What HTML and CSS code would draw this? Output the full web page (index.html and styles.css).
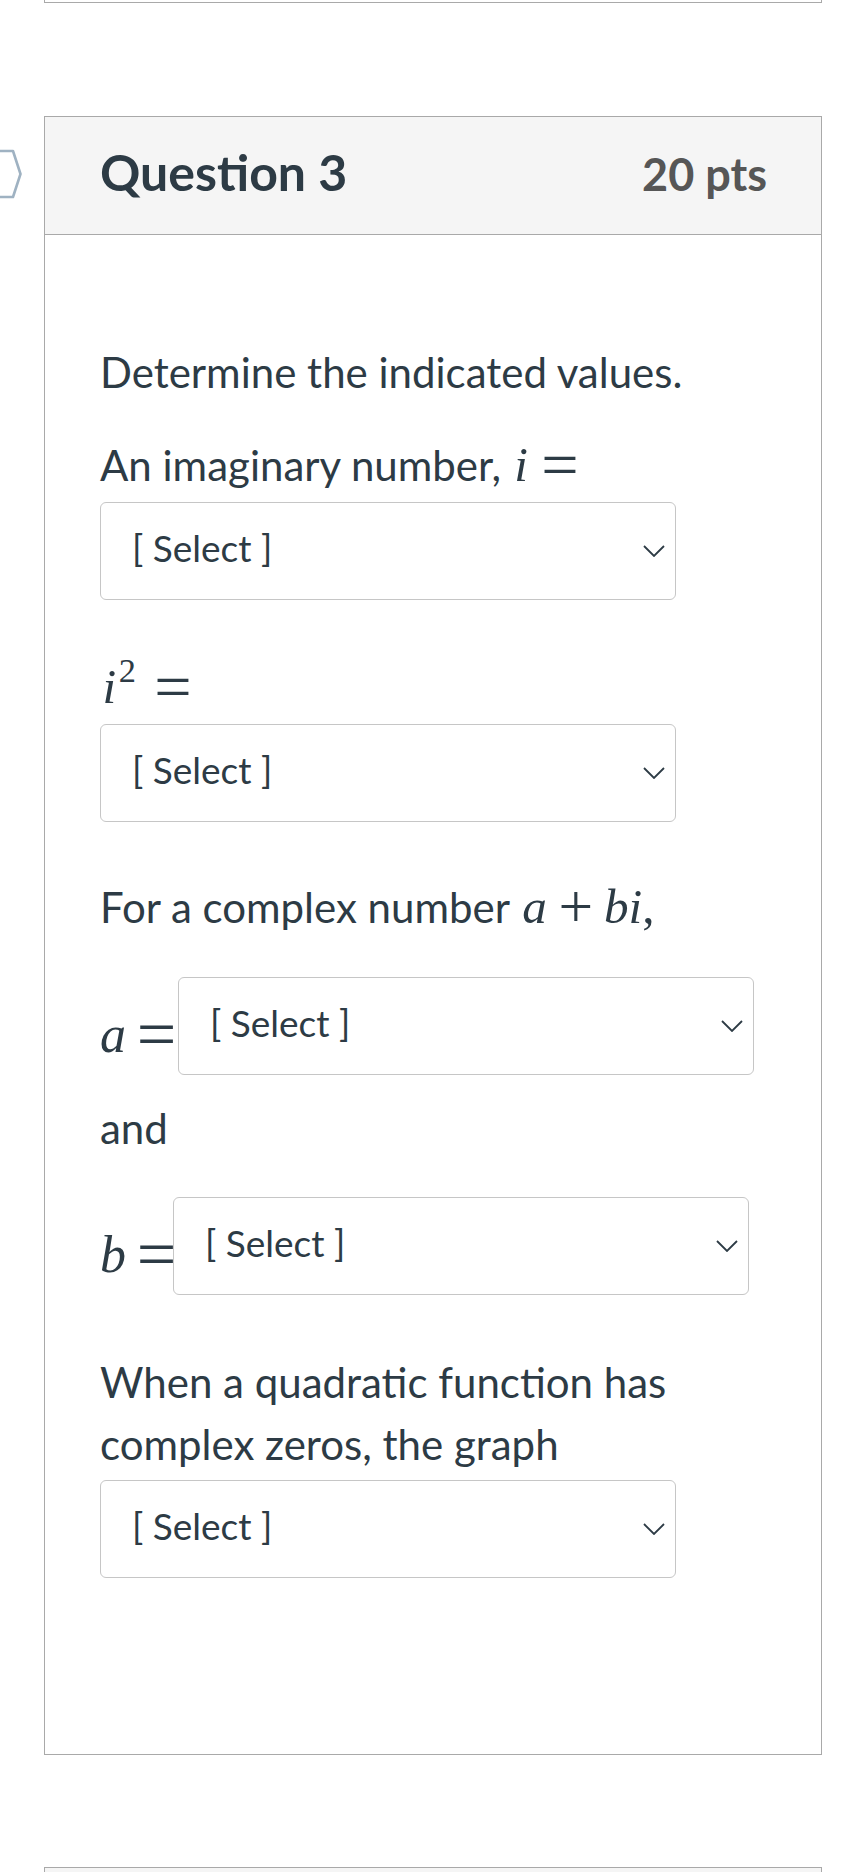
FILE: index.html
```html
<!DOCTYPE html>
<html lang="en">
<head>
<meta charset="utf-8">
<title>Question 3</title>
<link rel="stylesheet" href="styles.css">
</head>
<body>
<div class="prev"></div>

<div class="question">
  <svg class="flag" width="24" height="54" viewBox="0 0 24 54" aria-hidden="true">
    <polyline points="-6,3 13,3 20.5,26 13,49 -6,49" fill="none" stroke="#9fb2c2" stroke-width="2.6" stroke-linejoin="round"/>
  </svg>
  <div class="qhead">
    <span class="qtitle">Question 3</span>
    <span class="qpts">20 pts</span>
  </div>

  <div class="qbody">
    <p class="txt p1">Determine the indicated values.</p>

    <p class="txt p2">An imaginary number, <span class="math"><i class="mi">i</i><span class="rel">=</span></span></p>
    <div class="sel s1"><span class="seltxt">[ Select ]</span><svg class="chev" width="22" height="12" viewBox="0 0 22 12"><path d="M1 1 L11 11 L21 1" fill="none" stroke="#2d3b45" stroke-width="1.8"/></svg></div>

    <p class="txt p3"><span class="math"><i class="mi">i</i><sup class="sup">2</sup><span class="rel rel-wide">=</span></span></p>
    <div class="sel s2"><span class="seltxt">[ Select ]</span><svg class="chev" width="22" height="12" viewBox="0 0 22 12"><path d="M1 1 L11 11 L21 1" fill="none" stroke="#2d3b45" stroke-width="1.8"/></svg></div>

    <p class="txt p4">For a complex number <span class="math"><i class="mi">a</i><span class="bin">+</span><i class="mi">b</i><i class="mi">i</i>,</span></p>

    <div class="row ra">
      <span class="math lbl lbl-a"><i class="mi">a</i><span class="rel rel-tight">=</span></span>
      <div class="sel"><span class="seltxt">[ Select ]</span><svg class="chev" width="22" height="12" viewBox="0 0 22 12"><path d="M1 1 L11 11 L21 1" fill="none" stroke="#2d3b45" stroke-width="1.8"/></svg></div>
    </div>

    <p class="txt p5">and</p>

    <div class="row rb">
      <span class="math lbl lbl-b"><i class="mi">b</i><span class="rel rel-tight">=</span></span>
      <div class="sel"><span class="seltxt">[ Select ]</span><svg class="chev" width="22" height="12" viewBox="0 0 22 12"><path d="M1 1 L11 11 L21 1" fill="none" stroke="#2d3b45" stroke-width="1.8"/></svg></div>
    </div>

    <p class="txt p6">When a quadratic function has complex zeros, the graph</p>
    <div class="sel s5"><span class="seltxt">[ Select ]</span><svg class="chev" width="22" height="12" viewBox="0 0 22 12"><path d="M1 1 L11 11 L21 1" fill="none" stroke="#2d3b45" stroke-width="1.8"/></svg></div>
  </div>
</div>

<div class="next"><div class="nexthead"></div></div>
</body>
</html>
```

FILE: styles.css
```css
html, body {
  margin: 0;
  padding: 0;
  background: #ffffff;
}

body {
  font-family: Lato, "Open Sans", "Liberation Sans", sans-serif;
  color: #2d3b45;
}

.prev {
  box-sizing: border-box;
  margin-left: 44px;
  width: 778px;
  height: 3px;
  border: 1px solid #a9a9a9;
  border-top: none;
}

.question {
  position: relative;
  box-sizing: border-box;
  margin-top: 113px;
  margin-left: 44px;
  width: 778px;
  border: 1px solid #a9a9a9;
}

.flag {
  position: absolute;
  left: -45px;
  top: 31px;
}

.qhead {
  box-sizing: border-box;
  height: 118px;
  padding: 0 54px 8px 55px;
  background: #f5f5f5;
  border-bottom: 1px solid #a9a9a9;
  display: flex;
  align-items: center;
  justify-content: space-between;
  font-weight: 700;
  line-height: 1;
}

.qtitle {
  font-size: 50px;
  color: #2d3b45;
}

.qpts {
  font-size: 45px;
  color: #565656;
  padding-top: 5px;
}

.qbody {
  padding: 106px 54px 176px 55px;
}

.txt {
  margin: 0;
  font-size: 42px;
  line-height: 63px;
}

.p2 { margin-top: 30px; }
.p3 { margin-top: 56px; }
.p4 { margin-top: 54px; }
.p5 { margin-top: 22px; }
.p6 { margin-top: 56px; line-height: 62px; }

.math {
  font-family: "Liberation Serif", "Times New Roman", serif;
  font-size: 1.17em;
  line-height: 1;
  white-space: nowrap;
  margin-left: 0.05em;
}

.mi {
  font-style: italic;
}

.rel {
  display: inline-block;
  margin: 0 0.3em 0 0.37em;
  transform: scale(1.35, 1.35);
}

.rel-wide {
  margin-left: 0.47em;
}

.rel-tight {
  margin-left: 0.3em;
  margin-right: 0;
}

.bin {
  display: inline-block;
  margin: 0 0.3em;
  transform: scale(1.25, 1.25);
}

.sup {
  font-size: 0.7em;
  font-style: normal;
  line-height: 1;
  vertical-align: 0;
  position: relative;
  top: -0.62em;
  margin-left: 0.08em;
}

.sel {
  box-sizing: border-box;
  width: 576px;
  height: 98px;
  border: 1px solid #c6c6c6;
  border-radius: 6px;
  background: #ffffff;
  display: flex;
  align-items: center;
  justify-content: space-between;
  padding: 0 10px 7px 31px;
  flex: none;
}

.chev {
  margin-top: 7px;
}

.seltxt {
  font-size: 37px;
  color: #2d3b45;
}

.s1 { margin-top: 5px; }
.s2 { margin-top: 5px; }
.s5 { margin-top: 5px; }

.row {
  display: flex;
  align-items: flex-start;
}

.ra { margin-top: 38px; }
.rb { margin-top: 37px; }

.lbl {
  font-size: 52px;
  line-height: 1;
  margin-top: 32px;
  flex: none;
  margin-left: 0;
}

.lbl-a { width: 78px; }
.lbl-b { width: 73px; }

.next {
  box-sizing: border-box;
  margin-top: 112px;
  margin-left: 44px;
  width: 778px;
  border: 1px solid #a9a9a9;
  border-bottom: none;
}

.nexthead {
  height: 60px;
  background: #f5f5f5;
}
```
